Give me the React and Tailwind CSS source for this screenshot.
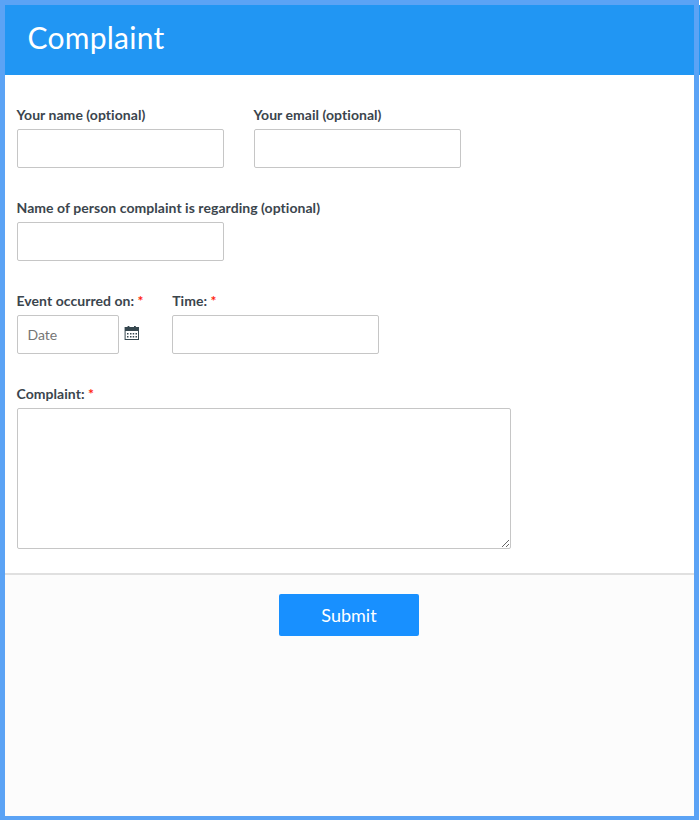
import React from "react";

function Label({ children, required }) {
  return (
    <label className="-ml-[0.5px] block h-[18px] whitespace-nowrap text-[14px] leading-[18px] font-bold tracking-[0.05px] text-[#3b454d]">
      {children}
      {required && <span className="tracking-normal text-[#ff1f0f]"> *</span>}
    </label>
  );
}

const inputClass =
  "mt-[5px] block h-[39px] w-[207px] rounded-[2px] border border-[#c6c6c6] bg-white px-[10px] text-[14px] outline-none";

function Field({ label, required }) {
  return (
    <div>
      <Label required={required}>{label}</Label>
      <input type="text" className={inputClass} />
    </div>
  );
}

function CalendarIcon() {
  return (
    <svg width="15" height="14" viewBox="0 0 15 14" fill="#36474f">
      <path d="M3.6 0h1.8v1H3.6zM10 0h1.8v1H10zM.6 1H15v4H.6zM.6 5h1v9h-1zM14 5h1v9h-1zM1.6 13H14v1H1.6z" />
      <path d="M3 7h1.5v1.5H3zM6 7h1.5v1.5H6zM8.7 7h1.5v1.5H8.7zM11.5 7H13v1.5h-1.5zM3 10h1.5v1.5H3zM6 10h1.5v1.5H6zM8.7 10h1.5v1.5H8.7zM11.5 10H13v1.5h-1.5z" />
    </svg>
  );
}

export default function App() {
  return (
    <div className="flex h-[820px] w-[700px] bg-white font-['Lato',sans-serif] [font-variant-ligatures:none]">
      <div className="flex h-full w-[699px] flex-col border-4 border-t-[5px] border-r-[5px] border-l-[5px] border-[#5ba3f5] bg-[#fcfcfc]">
        <header className="h-[70px] bg-[#2196f3] pl-[22.5px]">
          <h1 className="text-[30px] leading-[65px] tracking-[0.25px] text-white">Complaint</h1>
        </header>

        <form className="flex flex-1 flex-col">
          <div className="h-[500px] border-b-2 border-[#e0e0e0] bg-white pt-[31px] pl-[12px]">
            <div className="flex h-[93px] gap-[30px]">
              <Field label="Your name (optional)" />
              <Field label="Your email (optional)" />
            </div>
            <div className="h-[93px]">
              <Field label="Name of person complaint is regarding (optional)" />
            </div>
            <div className="flex h-[93px]">
              <div className="w-[155px]">
                <Label required>Event occurred on:</Label>
                <div className="flex">
                  <input
                    type="text"
                    placeholder="Date"
                    className="mt-[5px] h-[39px] w-[102px] rounded-[2px] border border-[#c6c6c6] bg-white px-[9.5px] text-[14px] outline-none placeholder:text-[#757575]"
                  />
                  <button type="button" className="mt-[16px] ml-[5px] h-[14px]">
                    <CalendarIcon />
                  </button>
                </div>
              </div>
              <Field label={<span className="ml-[0.7px]">Time:</span>} required />
            </div>
            <div>
              <Label required>Complaint:</Label>
              <textarea className="mt-[5px] block h-[141px] w-[494px] resize rounded-[2px] border border-[#c6c6c6] bg-white p-[10px] text-[14px] outline-none" />
            </div>
          </div>
          <div className="pt-[19px] pl-[274px]">
            <button type="button" className="h-[42px] w-[140px] rounded-[2px] bg-[#1890ff] text-[18px] text-white">
              Submit
            </button>
          </div>
        </form>
      </div>
      <div className="mt-[5px] h-[70px] w-px bg-[#2196f3]" />
    </div>
  );
}
